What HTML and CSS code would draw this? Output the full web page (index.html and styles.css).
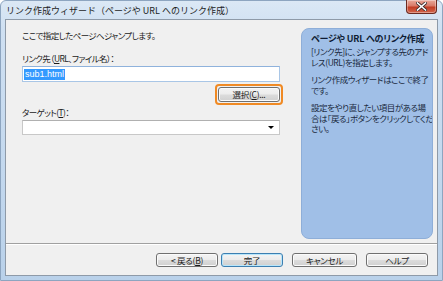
FILE: index.html
```html
<!DOCTYPE html>
<html lang="ja">
<head>
<meta charset="utf-8">
<link rel="stylesheet" href="styles.css">
</head>
<body>
<div class="window">
  <div class="titlebar">
    <span class="title">リンク作成ウィザード（ページや URL へのリンク作成）</span>
    <div class="close"><svg width="11" height="9" viewBox="0 0 11 9"><path d="M1.5 1 L9.5 8 M9.5 1 L1.5 8" stroke="#3a2a2a" stroke-width="3.2" stroke-linecap="square"/><path d="M1.5 1 L9.5 8 M9.5 1 L1.5 8" stroke="#ffffff" stroke-width="1.6" stroke-linecap="square"/></svg></div>
  </div>
  <div class="client">
    <div class="main">
      <div class="left">
        <div class="intro">ここで指定したページへジャンプします。</div>
        <div class="lbl lbl-link">リンク先（<u>U</u>RL、ファイル名）：</div>
        <div class="input"><span class="selected">sub1.html</span></div>
        <div class="browse-row">
          <div class="ring"><div class="btn browse">選択(<u>C</u>)...</div></div>
        </div>
        <div class="lbl lbl-target">ターゲット(<u>T</u>)：</div>
        <div class="select"><span class="arrow"></span></div>
      </div>
      <div class="panel">
        <div class="panel-title">ページや URL へのリンク作成</div>
        <p>[リンク先]に、ジャンプする先のアド<br>レス(URL)を指定します。</p>
        <p>リンク作成ウィザードはここで終了<br>です。</p>
        <p>設定をやり直したい項目がある場<br>合は「戻る」ボタンをクリックしてくだ<br>さい。</p>
      </div>
    </div>
    <div class="sep"></div>
    <div class="footer">
      <div class="btn fbtn back">&lt; 戻る(<u>B</u>)</div>
      <div class="btn fbtn default">完了</div>
      <div class="btn fbtn cancel">キャンセル</div>
      <div class="btn fbtn help">ヘルプ</div>
    </div>
  </div>
</div>
</body>
</html>
```
FILE: styles.css
```css
html, body {
  margin: 0;
  padding: 0;
}
body {
  width: 443px;
  height: 281px;
  overflow: hidden;
  font-family: "Noto Sans CJK JP", "Noto Sans", sans-serif;
  font-feature-settings: "palt";
  color: #1a1a1a;
}
.window {
  width: 443px;
  height: 281px;
  box-sizing: border-box;
  display: flex;
  flex-direction: column;
  background: linear-gradient(180deg, #dbe8f5 0%, #cfe0f2 10%, #c3d8ee 60%, #b9d1ea 100%);
  border: 1px solid #8da5c0;
  border-radius: 6px 6px 0 0;
  padding: 0 4px 4px 4px;
}
.titlebar {
  height: 18px;
  display: flex;
  justify-content: space-between;
  align-items: flex-start;
}
.title {
  font-size: 9px;
  font-feature-settings: normal;
  line-height: 12px;
  padding: 4px 0 0 1px;
  color: #1e1e1e;
  white-space: nowrap;
}
.close {
  width: 31px;
  height: 14px;
  margin-top: -1px;
  margin-right: 1px;
  box-sizing: border-box;
  border: 1px solid #6b2a20;
  border-top: none;
  border-radius: 0 0 4px 4px;
  background: linear-gradient(180deg, #e9a99a 0%, #d87a68 45%, #c23d24 55%, #d2664c 100%);
  box-shadow: inset 0 0 0 1px rgba(255,255,255,0.35);
  display: flex;
  align-items: center;
  justify-content: center;
}
.client {
  flex: 1;
  background: #f0f0f0;
  border: 1px solid #8e9aa8;
  display: flex;
  flex-direction: column;
}
.main {
  display: flex;
  padding: 8px 2px 0 16px;
  gap: 21px;
}
.left {
  width: 258px;
  display: flex;
  flex-direction: column;
  font-size: 8.5px;
  letter-spacing: -0.6px;
  line-height: 11px;
  white-space: nowrap;
}
.intro {
  margin-top: 2px;
}
.lbl-link {
  margin-top: 12px;
}
.input {
  margin-top: 2px;
  height: 16px;
  box-sizing: border-box;
  background: #fff;
  border: 1px solid #a9c6e6;
  border-top-color: #8fb2dc;
  padding: 2px 1px;
  display: flex;
  align-items: center;
}
.selected {
  background: #3399ff;
  color: #fff;
  font-family: "Liberation Sans", Arial, sans-serif;
  font-size: 9px;
  letter-spacing: 0;
  line-height: 11px;
  padding: 0 1px;
}
.browse-row {
  display: flex;
  justify-content: flex-end;
  margin-right: -3px;
  margin-top: 2px;
}
.ring {
  border: 2px solid #f08a24;
  border-radius: 4px;
  padding: 1px;
}
.btn {
  box-sizing: border-box;
  height: 15px;
  border: 1px solid #707070;
  border-radius: 3px;
  background: linear-gradient(180deg, #f4f4f4 0%, #ececec 48%, #dcdcdc 52%, #d0d0d0 100%);
  box-shadow: inset 0 0 0 1px #fbfbfb;
  font-size: 8.5px;
  letter-spacing: -0.3px;
  line-height: 13px;
  text-align: center;
  color: #1a1a1a;
  white-space: nowrap;
}
.browse {
  width: 62px;
}
.lbl-target {
  margin-top: 2px;
}
.select {
  margin-top: 2px;
  height: 15px;
  box-sizing: border-box;
  background: #fff;
  border: 1px solid #c8c8c8;
  border-top-color: #b0b0b0;
  display: flex;
  justify-content: flex-end;
  align-items: center;
  padding-right: 5px;
}
.arrow {
  width: 0;
  height: 0;
  border-left: 3px solid transparent;
  border-right: 3px solid transparent;
  border-top: 3px solid #000;
}
.panel {
  width: 132px;
  height: 211px;
  box-sizing: border-box;
  background: #a0bfe7;
  border: 1px solid #8eaed8;
  border-radius: 8px;
  padding: 4px 4px 0 9px;
  font-size: 8.5px;
  letter-spacing: -0.45px;
  line-height: 10.5px;
  color: #1a2a40;
  white-space: nowrap;
  overflow: hidden;
}
.panel-title {
  font-weight: bold;
  font-size: 9px;
  letter-spacing: -0.2px;
  line-height: 12px;
  color: #0e1c33;
}
.panel p {
  margin: 1px 0 7px 0;
}
.sep {
  margin-top: 4px;
  height: 0;
  border-top: 1px solid #a0a0a0;
  border-bottom: 1px solid #ffffff;
}
.footer {
  display: flex;
  justify-content: flex-end;
  padding: 8px 9px 0 0;
}
.fbtn {
  width: 62px;
  height: 14px;
  line-height: 12px;
}
.default {
  margin-left: 3px;
  border-color: #3c7fb1;
  box-shadow: inset 0 0 0 1px #b8e6fb;
}
.cancel {
  margin-left: 9px;
  width: 65px;
}
.help {
  margin-left: 9px;
}
```
